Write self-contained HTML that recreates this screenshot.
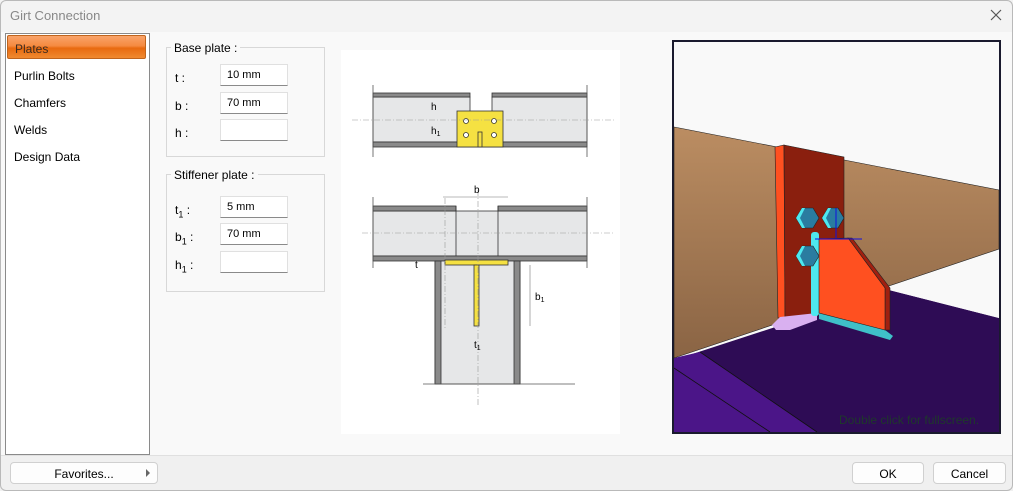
<!DOCTYPE html>
<html><head><meta charset="utf-8"><style>
*{box-sizing:border-box;margin:0;padding:0}
body{width:1013px;height:491px;overflow:hidden;background:#f0f0f0;font-family:"Liberation Sans",sans-serif;font-size:12px;color:#000;position:relative}
.abs{position:absolute}
.win{left:0;top:0;width:1013px;height:491px;background:#f0f0f0;overflow:hidden}
.frame{left:0;top:0;width:1013px;height:491px;border:1px solid #b9b9b9;border-radius:6px;pointer-events:none}
.title{left:0;top:0;width:1013px;height:32px;background:#f3f3f3}
.content{left:1px;top:32px;width:1011px;height:424px;background:#f9f9f9;border-bottom:1px solid #e0e0e0}
.list{left:5px;top:33px;width:145px;height:422px;background:#fff;border:1px solid #8a8a8a}
.sel{left:7px;top:35px;width:139px;height:24px;border:1px solid #c0641c;border-radius:2px;background:linear-gradient(#f9a36a 0%,#f58a40 45%,#e86a10 55%,#f08a30 100%);padding:6px 0 0 7px;color:#3a2a20}
.item{left:14px;font-size:12px}
.grp{border:1px solid #d8d8d8}
.lg{background:#f9f9f9;padding:0 3px}
.inp{background:#fff;border:1px solid #e0e0e0;border-bottom:1px solid #8a8a8a;width:68px;height:22px;padding:4px 0 0 6px;font-size:11px}
.lab{left:175px;font-size:12px}
.btn{background:#fdfdfd;border:1px solid #d0d0d0;border-radius:4px;text-align:center;padding-top:4px;font-size:12px}
sub{font-size:9px}
</style></head><body>
<div class="abs win">
<div class="abs title"></div>
<div class="abs" style="left:10px;top:8px;font-size:13px;color:#888">Girt Connection</div>
<svg class="abs" style="left:990px;top:9px" width="12" height="12"><path d="M1 1L11 11M11 1L1 11" stroke="#555" stroke-width="1.2"/></svg>
<div class="abs content"></div>
<div class="abs list"></div>
<div class="abs sel">Plates</div>
<div class="abs item" style="top:69px">Purlin Bolts</div>
<div class="abs item" style="top:96px">Chamfers</div>
<div class="abs item" style="top:123px">Welds</div>
<div class="abs item" style="top:150px">Design Data</div>

<div class="abs grp" style="left:166px;top:47px;width:159px;height:110px"></div>
<div class="abs lg" style="left:171px;top:41px">Base plate :</div>
<div class="abs lab" style="top:71px">t :</div>
<div class="abs lab" style="top:99px">b :</div>
<div class="abs lab" style="top:126px">h :</div>
<div class="abs inp" style="left:220px;top:64px">10 mm</div>
<div class="abs inp" style="left:220px;top:92px">70 mm</div>
<div class="abs inp" style="left:220px;top:119px"></div>

<div class="abs grp" style="left:166px;top:174px;width:159px;height:118px"></div>
<div class="abs lg" style="left:171px;top:168px">Stiffener plate :</div>
<div class="abs lab" style="top:203px">t<sub>1</sub> :</div>
<div class="abs lab" style="top:230px">b<sub>1</sub> :</div>
<div class="abs lab" style="top:258px">h<sub>1</sub> :</div>
<div class="abs inp" style="left:220px;top:196px">5 mm</div>
<div class="abs inp" style="left:220px;top:223px">70 mm</div>
<div class="abs inp" style="left:220px;top:251px"></div>

<svg class="abs" style="left:0;top:0" width="1013" height="491" font-family="Liberation Sans,sans-serif">
<rect x="341" y="50" width="279" height="384" fill="#fff"/>
<g stroke="#333" stroke-width="0.8">
<rect x="373" y="97" width="97" height="45" fill="#e6e7e8"/>
<rect x="492" y="97" width="95" height="45" fill="#e6e7e8"/>
<rect x="373" y="93" width="97" height="4" fill="#8a8a8a"/>
<rect x="492" y="93" width="95" height="4" fill="#8a8a8a"/>
<rect x="373" y="142" width="214" height="5" fill="#8a8a8a"/>
<rect x="457" y="111" width="46" height="36" fill="#f5e142"/>
<rect x="478" y="132" width="4" height="15" fill="#f5e142"/>
<circle cx="466" cy="121" r="2.5" fill="#fff"/><circle cx="494" cy="121" r="2.5" fill="#fff"/>
<circle cx="466" cy="135" r="2.5" fill="#fff"/><circle cx="494" cy="135" r="2.5" fill="#fff"/>
<rect x="373" y="211" width="214" height="45" fill="#e6e7e8"/>
<rect x="373" y="206" width="83" height="5" fill="#8a8a8a"/>
<rect x="498" y="206" width="89" height="5" fill="#8a8a8a"/>
<line x1="456" y1="206" x2="456" y2="256"/><line x1="498" y1="206" x2="498" y2="256"/>
<rect x="373" y="256" width="214" height="5" fill="#8a8a8a"/>
<rect x="435" y="261" width="85" height="123" fill="#e6e7e8"/>
<rect x="435" y="261" width="6" height="123" fill="#8a8a8a"/>
<rect x="514" y="261" width="6" height="123" fill="#8a8a8a"/>
<rect x="445" y="260" width="63" height="5" fill="#f5e142"/>
<rect x="474" y="265" width="5" height="61" fill="#f5e142"/>
</g>
<g stroke="#555" stroke-width="0.8" fill="none">
<path d="M373 85V157M587 85V157M373 197V268M587 197V268M423 384H575"/>
</g>
<g stroke="#999" stroke-width="0.6" stroke-dasharray="6 2 1 2" fill="none">
<path d="M352 120H615M362 233H615M478 190V405M445 198V330"/>
</g>
<text x="431" y="110" font-size="10">h</text><text x="431" y="134" font-size="10">h<tspan font-size="7" dy="2">1</tspan></text>
<text x="474" y="193" font-size="10">b</text><path d="M443 197H508" stroke="#777" stroke-width="0.6"/>
<text x="415" y="268" font-size="10">t</text>
<text x="535" y="300" font-size="10">b<tspan font-size="7" dy="2">1</tspan></text><path d="M530 265V326" stroke="#777" stroke-width="0.6"/>
<text x="474" y="348" font-size="10">t<tspan font-size="7" dy="2">1</tspan></text>

<rect x="673" y="41" width="327" height="392" fill="#f9f9f9" stroke="#1a1a2e" stroke-width="2"/>
<polygon points="674,360 889,290 999,318 999,432 674,432" fill="#2e0c55"/>
<polygon points="674,358 700,352 817,432 674,432" fill="#4b1588"/>
<path d="M674,368 770,432M700,352 817,432" stroke="#111" stroke-width="0.8"/>
<defs><linearGradient id="br" x1="0" y1="0" x2="0" y2="1"><stop offset="0" stop-color="#bb8d62"/><stop offset="1" stop-color="#8a6444"/></linearGradient></defs>
<polygon points="674,127 999,190 999,249 674,358" fill="url(#br)" stroke="#222" stroke-width="0.6"/>
<polygon points="889,290 999,250 999,318" fill="#f9f9f9"/>
<polygon points="775,147 784,145 785,317 778,318" fill="#ff5020" stroke="#222" stroke-width="0.6"/>
<polygon points="784,145 844,157 844,314 785,317" fill="#8a1f0e" stroke="#222" stroke-width="0.6"/>
<polygon points="772,325 780,317 817,313 817,320 790,330 776,330" fill="#d9b0f0"/>
<rect x="811" y="232" width="8" height="84" rx="3" fill="#4ee8ef"/>
<polygon points="819,313 885,330 893,336 890,340 819,319" fill="#3fc0c8"/>
<polygon points="848,238 852,238 890,288 890,330 885,330 885,288" fill="#a02010" stroke="#222" stroke-width="0.6"/>
<polygon points="819,239 848,238 885,288 885,330 819,313" fill="#ff5020" stroke="#222" stroke-width="0.6"/>
<g fill="#2a7ca0" stroke="#222" stroke-width="0.6">
<polygon points="796,218 802,208 813,208 819,218 813,228 802,228"/>
<polygon points="822,218 828,208 838,208 844,218 838,228 828,228"/>
<polygon points="796,256 802,246 813,246 819,256 813,266 802,266"/>
</g>
<g fill="#4ee8ef"><polygon points="796,218 802,208 805,208 800,218 805,228 802,228"/><polygon points="822,218 828,208 831,208 826,218 831,228 828,228"/><polygon points="796,256 802,246 805,246 800,256 805,266 802,266"/></g>
<path d="M836,208V238M815,239H862" stroke="#1010e0" stroke-width="1"/>
<text x="839" y="424" font-size="12" fill="#1e3a2a">Double click for fullscreen.</text>
</svg>

<div class="abs btn" style="left:10px;top:462px;width:148px;height:22px">Favorites...</div>
<svg class="abs" style="left:145px;top:469px" width="6" height="8"><path d="M1 0L5 4L1 8Z" fill="#666"/></svg>
<div class="abs btn" style="left:852px;top:462px;width:72px;height:22px">OK</div>
<div class="abs btn" style="left:933px;top:462px;width:73px;height:22px">Cancel</div>
<div class="abs frame"></div>
</div>
</body></html>
